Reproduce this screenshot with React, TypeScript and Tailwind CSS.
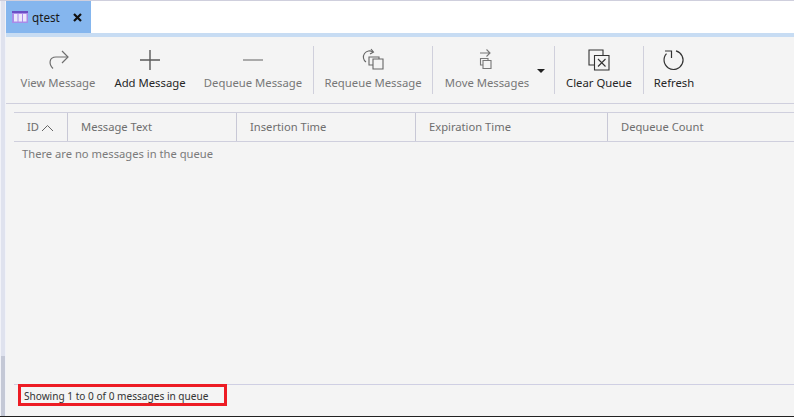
import { ReactNode } from "react"

const font = "font-['Noto_Sans',sans-serif]"

function ViewIcon() {
  return (
    <svg width="24" height="24" viewBox="0 0 24 24" fill="none" stroke="#6e6e6e" strokeWidth="1.2">
      <path d="M7 20.500 C2.500 16 3 9 10 9 L22 9" />
      <path d="M16 3 L22 9 L16 15" />
    </svg>
  )
}

function PlusIcon() {
  return (
    <svg width="24" height="24" viewBox="0 0 24 24" fill="none" stroke="#5a5a5a" strokeWidth="1.4">
      <path d="M12 2 V22 M2 12 H22" />
    </svg>
  )
}

function MinusIcon() {
  return (
    <svg width="24" height="24" viewBox="0 0 24 24" fill="none" stroke="#8a8a8a" strokeWidth="1.4">
      <path d="M2 12 H22" />
    </svg>
  )
}

function RequeueIcon() {
  return (
    <svg width="24" height="24" viewBox="0 0 24 24" fill="none" stroke="#666" strokeWidth="1.1">
      <path d="M5 14 A6 6 0 1 1 12 4" />
      <path d="M10 1 L12.500 4 L9 6" />
      <path d="M8 9 H18 V17 H8 Z" fill="#f4f4f4" />
      <path d="M12 11 H22 V21 H12 Z" fill="#f4f4f4" />
    </svg>
  )
}

function MoveIcon() {
  return (
    <svg width="24" height="24" viewBox="0 0 24 24" fill="none" stroke="#777" strokeWidth="1.1">
      <path d="M5 5 H15 M11.500 1.500 L15 5 L11.500 8.500" />
      <path d="M5.500 10.500 H13 V17 H5.500 Z" fill="#f4f4f4" />
      <path d="M8 12.500 H16 V20.500 H8 Z" fill="#f4f4f4" />
    </svg>
  )
}

function ClearIcon() {
  return (
    <svg width="24" height="24" viewBox="0 0 24 24" fill="none" stroke="#333" strokeWidth="1.1">
      <path d="M2 2 H16 V17 H2 Z" />
      <path d="M7.500 7.500 H22 V22 H7.500 Z" fill="#f4f4f4" />
      <path d="M11 11 L18.500 18.500 M18.500 11 L11 18.500" />
    </svg>
  )
}

function RefreshIcon() {
  return (
    <svg width="24" height="24" viewBox="0 0 24 24" fill="none" stroke="#333" strokeWidth="1.2">
      <path d="M14 2.800 A9.500 9.500 0 1 1 4.500 5.600" />
      <path d="M3 3 H9.500 V10" />
    </svg>
  )
}

function ToolButton({
  label,
  icon,
  width,
  disabled,
}: {
  label: string
  icon: ReactNode
  width: string
  disabled?: boolean
}) {
  return (
    <div className={`flex shrink-0 flex-col items-center ${width}`}>
      <div className="flex h-[24px] items-center justify-center">{icon}</div>
      <span
        className={`mt-[2px] text-[11.300px] leading-[17px] whitespace-nowrap ${disabled ? "text-[#777777]" : "text-[#262626]"}`}
      >
        {label}
      </span>
    </div>
  )
}

function Sep() {
  return <div className="h-[48px] w-px shrink-0 bg-[#d0d0dc]" />
}

const columns = [
  { title: "Message Text", width: "w-[169px]" },
  { title: "Insertion Time", width: "w-[179px]" },
  { title: "Expiration Time", width: "w-[192px]" },
  { title: "Dequeue Count", width: "flex-1" },
]

export default function App() {
  return (
    <div className={`flex h-[417px] w-[794px] flex-col overflow-hidden bg-white ${font}`}>
      <div className="h-px shrink-0 bg-[#cfcfdd]" />
      <div className="flex min-h-0 flex-1">
        {/* scrollbar strip on the left edge */}
        <div className="flex w-[6px] shrink-0 bg-[#f1f2f8] px-px">
          <div className="flex flex-1 flex-col bg-[#dfe2ee]">
            <div className="flex-1" />
            <div className="h-[60px] bg-[#c4c8d6]" />
          </div>
        </div>
        <div className="flex min-w-0 flex-1 flex-col">
          <div className="flex h-[32px] shrink-0 bg-white">
            <div className="flex w-[85px] items-center bg-[#85b6ee] pl-[6px]">
              <svg width="16" height="12" viewBox="0 0 16 12" className="shrink-0">
                <rect x="0" y="0" width="16" height="12" fill="#a98be8" />
                <rect x="0" y="0" width="16" height="2" fill="#6b4fc4" />
                <rect x="2" y="3" width="3.500" height="7.500" fill="#ece8fa" />
                <rect x="6.500" y="3" width="3.500" height="7.500" fill="#ece8fa" />
                <rect x="11" y="3" width="3.500" height="7.500" fill="#ece8fa" />
              </svg>
              <span className="ml-[4px] text-[11.700px] leading-[16px] text-[#1a1a1a]">qtest</span>
              <svg width="9" height="9" viewBox="0 0 9 9" className="ml-[13px]" stroke="#111" strokeWidth="2.200">
                <path d="M1 1 L8 8 M8 1 L1 8" />
              </svg>
            </div>
          </div>
          <div className="h-[4px] shrink-0 bg-[#c7dcf3]" />
          <div className="flex min-h-0 flex-1 flex-col bg-[#f4f4f4]">
            <div className="flex h-[67px] shrink-0 items-center border-b border-[#cfcfdd] pb-[1px]">
              <ToolButton label="View Message" icon={<ViewIcon />} width="ml-[3px] w-[98px]" disabled />
              <ToolButton label="Add Message" icon={<PlusIcon />} width="w-[86px]" />
              <ToolButton label="Dequeue Message" icon={<MinusIcon />} width="w-[120px]" disabled />
              <Sep />
              <ToolButton label="Requeue Message" icon={<RequeueIcon />} width="w-[118px]" disabled />
              <Sep />
              <ToolButton label="Move Messages" icon={<MoveIcon />} width="w-[108px]" disabled />
              <div className="relative w-[13px] shrink-0 self-stretch">
                <div className="absolute top-[32px] -left-[4px] h-0 w-0 border-x-[4px] border-t-[4px] border-x-transparent border-t-[#222222]" />
              </div>
              <Sep />
              <ToolButton label="Clear Queue" icon={<ClearIcon />} width="w-[88px]" />
              <Sep />
              <ToolButton label="Refresh" icon={<RefreshIcon />} width="w-[60px]" />
            </div>
            <div className="mt-[8px] ml-[8px] flex h-[30px] shrink-0 items-center border-y border-[#cfcfdd] text-[11.200px] text-[#6e6e6e]">
              <div className="flex h-full w-[53px] shrink-0 items-center pt-px pl-[13px]">
                ID
                <svg width="13" height="8" viewBox="0 0 13 8" fill="none" stroke="#666" strokeWidth="1" className="ml-[2px]">
                  <path d="M1 7 L6.500 1.500 L12 7" />
                </svg>
              </div>
              {columns.map((col) => (
                <div
                  key={col.title}
                  className={`flex h-full items-center border-l border-[#c8c8d6] pt-px pl-[13px] ${col.width}`}
                >
                  {col.title}
                </div>
              ))}
            </div>
            <div className="mt-[3px] ml-[16px] text-[11.200px] leading-[17px] text-[#7a7a7a]">
              There are no messages in the queue
            </div>
            <div className="mt-auto mb-[10px] ml-[8px] h-[22px] border-t border-[#cfcfe3]">
              <div className="ml-[4px] -mt-px flex h-[22px] w-[209px] items-center border-[3px] border-[#ed1c24] pt-[4px] pl-[3px] text-[10.100px] text-[#333333] whitespace-nowrap">
                Showing 1 to 0 of 0 messages in queue
              </div>
            </div>
          </div>
        </div>
      </div>
      <div className="h-px shrink-0 bg-[#222222]" />
    </div>
  )
}
